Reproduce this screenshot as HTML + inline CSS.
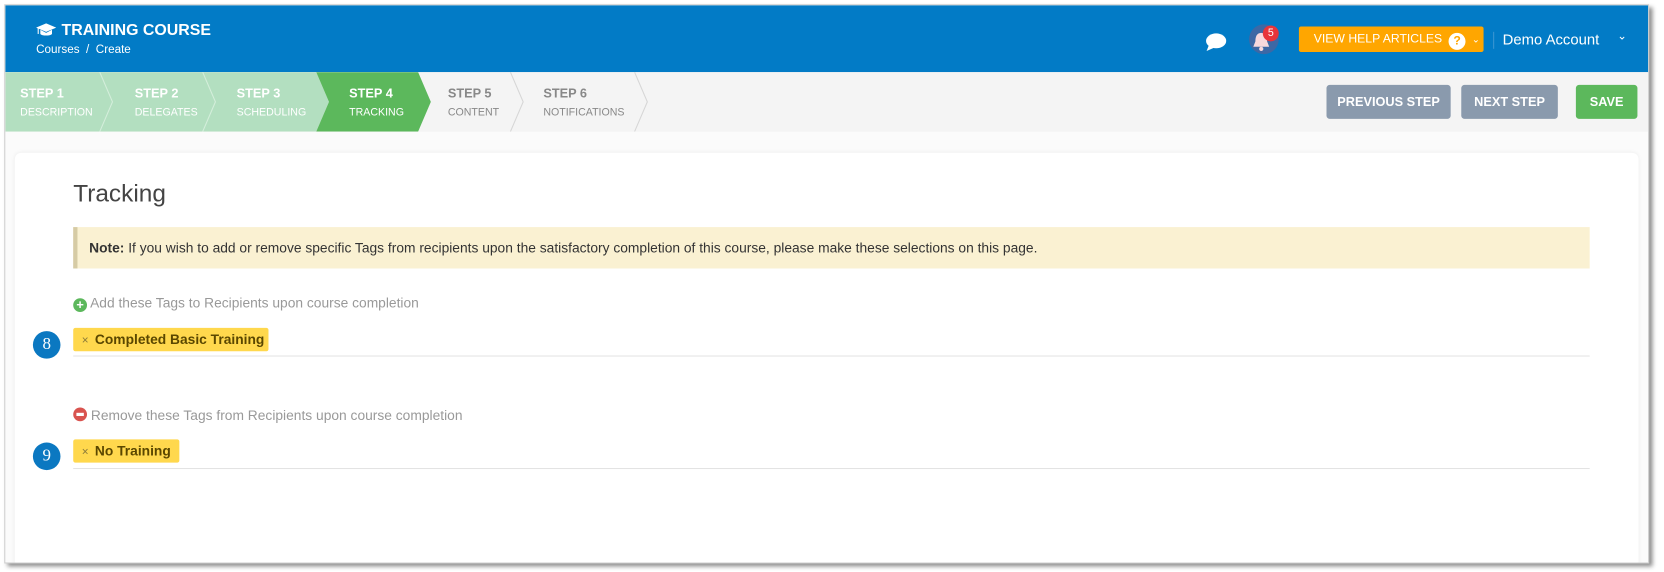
<!DOCTYPE html>
<html><head><style>
*{margin:0;padding:0;box-sizing:border-box}
body{width:1664px;height:572px;background:#fff;font-family:"Liberation Sans",sans-serif;position:relative;overflow:hidden}
.wrap{position:absolute;left:0;top:0;width:1568px;height:539px;transform:scale(1.0612);transform-origin:0 0}
.frame{position:absolute;left:4px;top:4px;width:1550px;height:527px;background:#fbfbfb;box-shadow:3px 3px 4px rgba(0,0,0,.45);border:1px solid #cfcfcf;overflow:hidden}
.hdr{position:absolute;left:0;top:0;width:1550px;height:63px;background:#027bc6;color:#fff}
.abs{position:absolute;white-space:nowrap}
.bar{position:absolute;left:0;top:63px;width:1550px;height:56px;background:#f4f4f4}
.btn{position:absolute;top:12px;height:32px;border-radius:3px;color:#fff;font-weight:bold;font-size:12px;line-height:32px;text-align:center}
.card{position:absolute;left:9px;top:139px;width:1530px;height:400px;background:#fff;border-radius:6px;box-shadow:0 0 4px rgba(0,0,0,.06)}
.lbl{color:#999;font-size:13px}
.tag{position:absolute;background:#ffd84d;color:#5a4700;font-weight:bold;font-size:13px;height:22px;line-height:22px;padding-left:8px;border-radius:2px}
.tag span{color:#8a7a3a;font-weight:normal;font-size:11px;margin-right:6px}
.num{position:absolute;width:26px;height:26px;border-radius:50%;background:#0b78c1;color:#fff;font-family:"Liberation Serif",serif;font-size:16px;line-height:26px;text-align:center}
.line{position:absolute;left:64px;width:1429px;height:1px;background:#e3e3e3}
</style></head><body>
<div class="wrap">
<div class="frame">
 <div class="hdr">
  <svg class="abs" style="left:29px;top:17px" width="19" height="13" viewBox="0 0 19 13"><path d="M9.5 0L19 4 9.5 8 0 4z" fill="#fff"/><path d="M4 6v4c2 2 9 2 11 0V6L9.5 9z" fill="#fff"/><rect x="1.5" y="4" width="1" height="6" fill="#fff"/></svg>
  <div class="abs" style="left:53px;top:15px;font-size:15px;font-weight:bold">TRAINING COURSE</div>
  <div class="abs" style="left:29px;top:36px;font-size:11px">Courses&nbsp; / &nbsp;Create</div>
  <svg class="abs" style="left:1131px;top:26px" width="20" height="17" viewBox="0 0 20 17"><ellipse cx="10" cy="7.5" rx="9.5" ry="7" fill="#fff"/><path d="M3 12L1 17 8 14z" fill="#fff"/></svg>
  <div class="abs" style="left:1172px;top:18px;width:28px;height:28px;border-radius:50%;background:rgba(200,60,90,.3)"></div>
  <svg class="abs" style="left:1175px;top:25px" width="17" height="19" viewBox="0 0 17 19"><path d="M8.5 1C4 1 3 5 3 9L1 14h15l-2-5c0-4-1-8-5.5-8z" fill="#f8d8dc"/><circle cx="8.5" cy="16" r="2" fill="#f8d8dc"/></svg>
  <div class="abs" style="left:1185px;top:19px;width:15px;height:15px;border-radius:50%;background:#e8343a;font-size:10px;line-height:15px;text-align:center">5</div>
  <div class="abs" style="left:1219px;top:20px;width:174px;height:24px;background:#ffa600;border-radius:2px;font-size:11.5px;line-height:24px;padding-left:14px">VIEW HELP ARTICLES<span style="display:inline-block;width:16px;height:16px;border-radius:50%;background:#fff;color:#ffa600;font-weight:bold;text-align:center;line-height:16px;margin-left:6px;vertical-align:-2px">?</span><span style="font-size:9px;margin-left:6px">&#8964;</span></div>
  <div class="abs" style="left:1402px;top:25px;width:1px;height:16px;background:#3a96d2"></div>
  <div class="abs" style="left:1411px;top:24px;font-size:14px">Demo Account</div>
  <div class="abs" style="left:1519px;top:22px;font-size:11px">&#8964;</div>
 </div>
 <div class="bar">
  <svg class="abs" style="left:0;top:0" width="620" height="56" viewBox="0 0 620 56">
   <path d="M0 0H89L101 28 89 56H0z" fill="#b3dfc0"/>
   <path d="M89 0H186L198 28 186 56H89L101 28z" fill="#b3dfc0"/>
   <path d="M186 0H293L305 28 293 56H186L198 28z" fill="#b3dfc0"/>
   <path d="M293 0H389L401 28 389 56H293L305 28z" fill="#5cb85c"/>
   <path d="M89 0L101 28 89 56M186 0L198 28 186 56" stroke="#d4eedb" fill="none"/>
   <path d="M476 0L488 28 476 56M593 0L605 28 593 56" stroke="#d6d6d6" fill="none"/>
  </svg>
  <div class="abs" style="left:14px;top:13px;font-size:12px;font-weight:bold;color:#fff">STEP 1</div><div class="abs" style="left:14px;top:33px;font-size:10px;color:#fff">DESCRIPTION</div>
  <div class="abs" style="left:122px;top:13px;font-size:12px;font-weight:bold;color:#fff">STEP 2</div><div class="abs" style="left:122px;top:33px;font-size:10px;color:#fff">DELEGATES</div>
  <div class="abs" style="left:218px;top:13px;font-size:12px;font-weight:bold;color:#fff">STEP 3</div><div class="abs" style="left:218px;top:33px;font-size:10px;color:#fff">SCHEDULING</div>
  <div class="abs" style="left:324px;top:13px;font-size:12px;font-weight:bold;color:#fff">STEP 4</div><div class="abs" style="left:324px;top:33px;font-size:10px;color:#fff">TRACKING</div>
  <div class="abs" style="left:417px;top:13px;font-size:12px;font-weight:bold;color:#888">STEP 5</div><div class="abs" style="left:417px;top:33px;font-size:10px;color:#888">CONTENT</div>
  <div class="abs" style="left:507px;top:13px;font-size:12px;font-weight:bold;color:#888">STEP 6</div><div class="abs" style="left:507px;top:33px;font-size:10px;color:#888">NOTIFICATIONS</div>
  <div class="btn" style="left:1245px;width:117px;background:#8a9aad">PREVIOUS STEP</div>
  <div class="btn" style="left:1372px;width:91px;background:#8a9aad">NEXT STEP</div>
  <div class="btn" style="left:1480px;width:58px;background:#5cb85c">SAVE</div>
 </div>
 <div class="card">
  <div class="abs" style="left:55px;top:25px;font-size:23px;color:#444">Tracking</div>
  <div class="abs" style="left:55px;top:70px;width:1429px;height:39px;background:#faf1d2;border-left:4px solid #d6cba5;font-size:13px;line-height:39px;padding-left:11px;color:#333"><b>Note:</b> If you wish to add or remove specific Tags from recipients upon the satisfactory completion of this course, please make these selections on this page.</div>
  <div class="abs lbl" style="left:55px;top:134px"><span style="display:inline-block;width:13px;height:13px;border-radius:50%;background:#5cb85c;color:#fff;font-size:12px;font-weight:bold;line-height:13px;text-align:center;vertical-align:-1px">+</span> Add these Tags to Recipients upon course completion</div>
  <div class="num" style="left:17px;top:168px">8</div>
  <div class="tag" style="left:55px;top:165px;width:184px"><span>×</span>Completed Basic Training</div>
  <div class="line" style="left:55px;top:191px"></div>
  <div class="abs lbl" style="left:55px;top:240px"><span style="display:inline-block;width:13px;height:13px;border-radius:50%;background:#d9534f;vertical-align:-1px;position:relative"><i style="position:absolute;left:3px;top:5px;width:7px;height:3px;background:#fff"></i></span> Remove these Tags from Recipients upon course completion</div>
  <div class="num" style="left:17px;top:273px">9</div>
  <div class="tag" style="left:55px;top:270px;width:100px"><span>×</span>No Training</div>
  <div class="line" style="left:55px;top:297px"></div>
 </div>
</div>
</div>
</body></html>
